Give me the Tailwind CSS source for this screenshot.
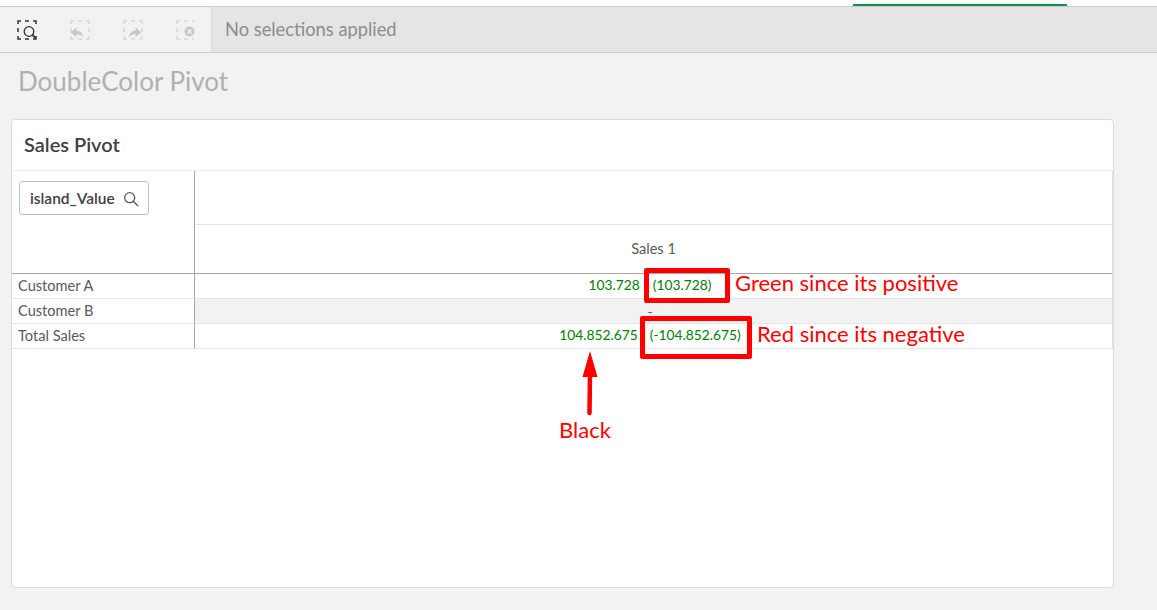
<!DOCTYPE html>
<html><head><meta charset="utf-8"><script src="https://cdn.jsdelivr.net/npm/@tailwindcss/browser@4"></script></head>
<body class="w-[1157px] h-[610px] overflow-hidden bg-[#f2f2f2] relative font-['Lato',sans-serif]">
<div class="h-[6px] bg-white relative"><div class="absolute left-[853px] top-[4px] w-[214px] h-[2px] bg-[#009845]"></div></div>
<div class="h-[47px] border-y border-[#cccccc] flex">
  <div class="w-[212px] flex items-center border-r border-[#dcdcdc] pl-[17px] gap-[33px]">
    <svg width="20" height="20" viewBox="0 0 20 20" fill="none"><path d="M1 4V1H4M8 1h4M16 1h3v3M19 16v3h-3M12 19H8M4 19H1v-3M1 12V8" stroke="#333" stroke-width="1.500"/><circle cx="12" cy="11.500" r="4.800" fill="#f2f2f2" stroke="#333" stroke-width="1.300"/><path d="M15.500 15l3 3" stroke="#333" stroke-width="1.800"/></svg>
    <svg width="20" height="20" viewBox="0 0 20 20" fill="none"><path d="M1 4V1H4M8 1h4M16 1h3v3M19 8v4M19 16v3h-3M12 19H8M4 19H1v-3M1 12V8" stroke="#d8d8d8" stroke-width="1.500"/><path d="M.5 12.500L6.500 7.500v3.200c4 0 6.500 2.500 7 7.300-1.800-3-3.500-3.800-7-3.800v2.800z" fill="#c8c8c8"/></svg>
    <svg width="20" height="20" viewBox="0 0 20 20" fill="none"><path d="M1 4V1H4M8 1h4M16 1h3v3M19 8v4M19 16v3h-3M12 19H8M4 19H1v-3M1 12V8" stroke="#d8d8d8" stroke-width="1.500"/><path d="M18.500 12.500L12.500 7.500v3.200c-4 0-6.500 2.500-7 7.300 1.800-3 3.500-3.800 7-3.800v2.800z" fill="#c8c8c8"/></svg>
    <svg width="20" height="20" viewBox="0 0 20 20" fill="none"><path d="M1 4V1H4M8 1h4M16 1h3M1 8v4M4 19H1v-3M12 19H8M16 19h2" stroke="#d8d8d8" stroke-width="1.500"/><circle cx="13.500" cy="11.500" r="5" fill="#c8c8c8"/><path d="M11.600 9.600l3.800 3.800M15.400 9.600l-3.800 3.800" stroke="#f2f2f2" stroke-width="1.400"/></svg>
  </div>
  <div class="flex-1 bg-[#e5e5e5] flex items-center pl-[13px] text-[18.3px] text-[#8c8c8c]">No selections applied</div>
</div>
<h1 class="ml-[18px] mt-[11px] h-[55px] leading-[34px] text-[26px] font-normal text-[#b0b0b0]">DoubleColor Pivot</h1>
<main class="ml-[11px] w-[1103px] h-[469px] bg-white border border-[#dcdcdc] rounded-[4px] flex flex-col">
  <h2 class="h-[51px] pl-[12px] pb-[2px] flex items-center text-[20px] font-semibold text-[#404040] border-b border-[#eeeeee] shrink-0">Sales Pivot</h2>
  <div class="grid grid-cols-[183px_917px] grid-rows-[103px_25px_25px_25px] text-[14.6px] text-[#595959] border-r border-[#e0e0e0]">
    <div class="border-r border-b border-[#a6a6a6] pl-[7px] pt-[10px]">
      <div class="w-[130px] h-[34px] border border-[#bfbfbf] rounded-[3px] flex items-center justify-between pl-[10px] pr-[9px] pt-[1px] text-[15.500px] font-semibold text-[#404040]"><span>island_Value</span>
        <svg width="16" height="16" viewBox="0 0 16 16" fill="none" stroke="#595959" stroke-width="1.300"><circle cx="6.700" cy="6.700" r="5"/><path d="M10.300 10.300l4.700 4.700"/></svg></div>
    </div>
    <div class="border-b border-[#a6a6a6] flex flex-col">
      <div class="h-[54px] border-b border-[#e6e6e6]"></div>
      <div class="flex-1 flex items-center justify-center">Sales 1</div>
    </div>
    <div class="border-r border-b border-r-[#a6a6a6] border-b-[#e6e6e6] pl-[6px] flex items-center">Customer A</div>
    <div class="border-b border-[#e6e6e6] flex items-center justify-center gap-[13px] pr-[7px] pb-[2px] text-[13.800px] text-[#008000]"><span>103.728</span><span>(103.728)</span></div>
    <div class="border-r border-b border-r-[#a6a6a6] border-b-[#e6e6e6] pl-[6px] flex items-center">Customer B</div>
    <div class="border-b border-[#e6e6e6] bg-[#f2f2f2] flex items-center justify-center pr-[7px] pt-[1px] text-[14px]">-</div>
    <div class="border-r border-b border-r-[#a6a6a6] border-b-[#e6e6e6] pl-[6px] flex items-center">Total Sales</div>
    <div class="border-b border-[#e6e6e6] flex items-center justify-center gap-[12px] pr-[7px] pb-[1px] text-[13.800px] text-[#008000]"><span>104.852.675</span><span>(-104.852.675)</span></div>
  </div>
</main>
<div class="absolute left-[644px] top-[268px] w-[86px] h-[35px] border-[5px] border-[#ff0000] rounded-[2px]"></div>
<div class="absolute left-[640px] top-[316px] w-[112px] h-[43px] border-[5px] border-[#ff0000] rounded-[2px]"></div>
<div class="absolute left-[735px] top-[269px] text-[22px] leading-[28px] text-[#ff0000] whitespace-nowrap">Green since its positive</div>
<div class="absolute left-[757px] top-[320px] text-[22px] leading-[28px] text-[#ff0000] whitespace-nowrap">Red since its negative</div>
<div class="absolute left-[559px] top-[416px] text-[22px] leading-[28px] text-[#ff0000] whitespace-nowrap">Black</div>
<svg class="absolute left-[580px] top-[350px]" width="20" height="66" viewBox="0 0 20 66" fill="none"><path d="M9.500 63L10 24" stroke="#ff0000" stroke-width="4.500" stroke-linecap="round"/><path d="M10 1L2.500 27H17.500z" fill="#ff0000"/></svg>
</body></html>
